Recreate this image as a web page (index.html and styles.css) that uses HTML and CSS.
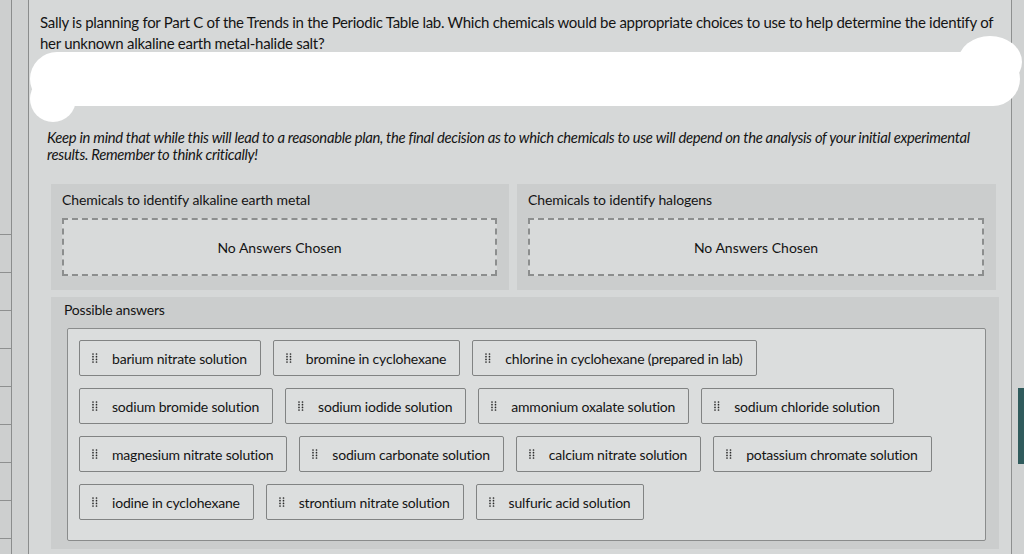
FILE: index.html
```html
<!DOCTYPE html>
<html lang="en">
<head>
<meta charset="utf-8">
<title>Trends in the Periodic Table</title>
<link rel="stylesheet" href="styles.css">
</head>
<body>
<div class="screen">
  <div class="rail"></div>
  <div class="gutter"></div>
  <main class="page">
    <p class="prompt">Sally is planning for Part C of the Trends in the Periodic Table lab. Which chemicals would be appropriate choices to use to help determine the identify of her unknown alkaline earth metal-halide salt?</p>
    <p class="hint">Keep in mind that while this will lead to a reasonable plan, the final decision as to which chemicals to use will depend on the analysis of your initial experimental results. Remember to think critically!</p>

    <section class="targets">
      <div class="target">
        <h3 class="target-title">Chemicals to identify alkaline earth metal</h3>
        <div class="dropzone">No Answers Chosen</div>
      </div>
      <div class="target">
        <h3 class="target-title">Chemicals to identify halogens</h3>
        <div class="dropzone">No Answers Chosen</div>
      </div>
    </section>

    <section class="pool">
      <h3 class="pool-title">Possible answers</h3>
      <div class="pool-box">
        <div class="chip-row">
          <div class="chip"><svg class="grip" viewBox="0 0 6 10"><circle cx="1" cy="1" r="0.85"/><circle cx="4.5" cy="1" r="0.85"/><circle cx="1" cy="3.7" r="0.85"/><circle cx="4.5" cy="3.7" r="0.85"/><circle cx="1" cy="6.4" r="0.85"/><circle cx="4.5" cy="6.4" r="0.85"/><circle cx="1" cy="9" r="0.85"/><circle cx="4.5" cy="9" r="0.85"/></svg><span>barium nitrate solution</span></div>
          <div class="chip"><svg class="grip" viewBox="0 0 6 10"><circle cx="1" cy="1" r="0.85"/><circle cx="4.5" cy="1" r="0.85"/><circle cx="1" cy="3.7" r="0.85"/><circle cx="4.5" cy="3.7" r="0.85"/><circle cx="1" cy="6.4" r="0.85"/><circle cx="4.5" cy="6.4" r="0.85"/><circle cx="1" cy="9" r="0.85"/><circle cx="4.5" cy="9" r="0.85"/></svg><span>bromine in cyclohexane</span></div>
          <div class="chip"><svg class="grip" viewBox="0 0 6 10"><circle cx="1" cy="1" r="0.85"/><circle cx="4.5" cy="1" r="0.85"/><circle cx="1" cy="3.7" r="0.85"/><circle cx="4.5" cy="3.7" r="0.85"/><circle cx="1" cy="6.4" r="0.85"/><circle cx="4.5" cy="6.4" r="0.85"/><circle cx="1" cy="9" r="0.85"/><circle cx="4.5" cy="9" r="0.85"/></svg><span>chlorine in cyclohexane (prepared in lab)</span></div>
        </div>
        <div class="chip-row">
          <div class="chip"><svg class="grip" viewBox="0 0 6 10"><circle cx="1" cy="1" r="0.85"/><circle cx="4.5" cy="1" r="0.85"/><circle cx="1" cy="3.7" r="0.85"/><circle cx="4.5" cy="3.7" r="0.85"/><circle cx="1" cy="6.4" r="0.85"/><circle cx="4.5" cy="6.4" r="0.85"/><circle cx="1" cy="9" r="0.85"/><circle cx="4.5" cy="9" r="0.85"/></svg><span>sodium bromide solution</span></div>
          <div class="chip"><svg class="grip" viewBox="0 0 6 10"><circle cx="1" cy="1" r="0.85"/><circle cx="4.5" cy="1" r="0.85"/><circle cx="1" cy="3.7" r="0.85"/><circle cx="4.5" cy="3.7" r="0.85"/><circle cx="1" cy="6.4" r="0.85"/><circle cx="4.5" cy="6.4" r="0.85"/><circle cx="1" cy="9" r="0.85"/><circle cx="4.5" cy="9" r="0.85"/></svg><span>sodium iodide solution</span></div>
          <div class="chip"><svg class="grip" viewBox="0 0 6 10"><circle cx="1" cy="1" r="0.85"/><circle cx="4.5" cy="1" r="0.85"/><circle cx="1" cy="3.7" r="0.85"/><circle cx="4.5" cy="3.7" r="0.85"/><circle cx="1" cy="6.4" r="0.85"/><circle cx="4.5" cy="6.4" r="0.85"/><circle cx="1" cy="9" r="0.85"/><circle cx="4.5" cy="9" r="0.85"/></svg><span>ammonium oxalate solution</span></div>
          <div class="chip"><svg class="grip" viewBox="0 0 6 10"><circle cx="1" cy="1" r="0.85"/><circle cx="4.5" cy="1" r="0.85"/><circle cx="1" cy="3.7" r="0.85"/><circle cx="4.5" cy="3.7" r="0.85"/><circle cx="1" cy="6.4" r="0.85"/><circle cx="4.5" cy="6.4" r="0.85"/><circle cx="1" cy="9" r="0.85"/><circle cx="4.5" cy="9" r="0.85"/></svg><span>sodium chloride solution</span></div>
        </div>
        <div class="chip-row">
          <div class="chip"><svg class="grip" viewBox="0 0 6 10"><circle cx="1" cy="1" r="0.85"/><circle cx="4.5" cy="1" r="0.85"/><circle cx="1" cy="3.7" r="0.85"/><circle cx="4.5" cy="3.7" r="0.85"/><circle cx="1" cy="6.4" r="0.85"/><circle cx="4.5" cy="6.4" r="0.85"/><circle cx="1" cy="9" r="0.85"/><circle cx="4.5" cy="9" r="0.85"/></svg><span>magnesium nitrate solution</span></div>
          <div class="chip"><svg class="grip" viewBox="0 0 6 10"><circle cx="1" cy="1" r="0.85"/><circle cx="4.5" cy="1" r="0.85"/><circle cx="1" cy="3.7" r="0.85"/><circle cx="4.5" cy="3.7" r="0.85"/><circle cx="1" cy="6.4" r="0.85"/><circle cx="4.5" cy="6.4" r="0.85"/><circle cx="1" cy="9" r="0.85"/><circle cx="4.5" cy="9" r="0.85"/></svg><span>sodium carbonate solution</span></div>
          <div class="chip"><svg class="grip" viewBox="0 0 6 10"><circle cx="1" cy="1" r="0.85"/><circle cx="4.5" cy="1" r="0.85"/><circle cx="1" cy="3.7" r="0.85"/><circle cx="4.5" cy="3.7" r="0.85"/><circle cx="1" cy="6.4" r="0.85"/><circle cx="4.5" cy="6.4" r="0.85"/><circle cx="1" cy="9" r="0.85"/><circle cx="4.5" cy="9" r="0.85"/></svg><span>calcium nitrate solution</span></div>
          <div class="chip"><svg class="grip" viewBox="0 0 6 10"><circle cx="1" cy="1" r="0.85"/><circle cx="4.5" cy="1" r="0.85"/><circle cx="1" cy="3.7" r="0.85"/><circle cx="4.5" cy="3.7" r="0.85"/><circle cx="1" cy="6.4" r="0.85"/><circle cx="4.5" cy="6.4" r="0.85"/><circle cx="1" cy="9" r="0.85"/><circle cx="4.5" cy="9" r="0.85"/></svg><span>potassium chromate solution</span></div>
        </div>
        <div class="chip-row">
          <div class="chip"><svg class="grip" viewBox="0 0 6 10"><circle cx="1" cy="1" r="0.85"/><circle cx="4.5" cy="1" r="0.85"/><circle cx="1" cy="3.7" r="0.85"/><circle cx="4.5" cy="3.7" r="0.85"/><circle cx="1" cy="6.4" r="0.85"/><circle cx="4.5" cy="6.4" r="0.85"/><circle cx="1" cy="9" r="0.85"/><circle cx="4.5" cy="9" r="0.85"/></svg><span>iodine in cyclohexane</span></div>
          <div class="chip"><svg class="grip" viewBox="0 0 6 10"><circle cx="1" cy="1" r="0.85"/><circle cx="4.5" cy="1" r="0.85"/><circle cx="1" cy="3.7" r="0.85"/><circle cx="4.5" cy="3.7" r="0.85"/><circle cx="1" cy="6.4" r="0.85"/><circle cx="4.5" cy="6.4" r="0.85"/><circle cx="1" cy="9" r="0.85"/><circle cx="4.5" cy="9" r="0.85"/></svg><span>strontium nitrate solution</span></div>
          <div class="chip"><svg class="grip" viewBox="0 0 6 10"><circle cx="1" cy="1" r="0.85"/><circle cx="4.5" cy="1" r="0.85"/><circle cx="1" cy="3.7" r="0.85"/><circle cx="4.5" cy="3.7" r="0.85"/><circle cx="1" cy="6.4" r="0.85"/><circle cx="4.5" cy="6.4" r="0.85"/><circle cx="1" cy="9" r="0.85"/><circle cx="4.5" cy="9" r="0.85"/></svg><span>sulfuric acid solution</span></div>
        </div>
      </div>
    </section>
  </main>
  <div class="edge"><div class="edge-tab"></div></div>

  <div class="redact">
    <div class="redact-bar"></div>
    <div class="redact-bump-right"></div>
    <div class="redact-bump-left"></div>
  </div>
</div>
</body>
</html>
```

FILE: styles.css
```css
* { box-sizing: border-box; }

html, body {
  margin: 0;
  padding: 0;
}

body {
  width: 1024px;
  height: 554px;
  overflow: hidden;
  background: #d3d5d5;
  font-family: Lato, "Open Sans", "Liberation Sans", sans-serif;
  color: #141414;
}

.screen {
  position: relative;
  display: flex;
  height: 554px;
}

.rail {
  width: 12px;
  flex: none;
  border-right: 1px solid #8b8d8d;
  background-color: #cdcfcf;
  background-image: repeating-linear-gradient(to bottom, transparent 0, transparent 37px, #8e9090 37px, #8e9090 38px);
  background-position: 0 197px;
  background-repeat: no-repeat;
  background-size: 100% 400px;
}

.gutter {
  width: 17px;
  flex: none;
  border-right: 1px solid #8b8d8d;
  background: #cfd1d1;
}

.page {
  flex: 1;
  min-width: 0;
  padding: 12px 12px 0 11px;
  border-right: 1px solid #8e9090;
  background: #d6d8d8;
}

.edge {
  width: 12px;
  flex: none;
  background: #d0d2d2;
  padding-top: 388px;
}

.edge-tab {
  margin-left: 6px;
  height: 76px;
  background: #2f5b5c;
}

.prompt {
  margin: 0;
  font-size: 15px;
  line-height: 21px;
  letter-spacing: -0.28px;
}

.hint {
  margin: 75px 0 0 7px;
  font-size: 14.8px;
  line-height: 17px;
  font-style: italic;
  letter-spacing: -0.3px;
}

.targets {
  margin: 21px 3px 0 11px;
  display: grid;
  grid-template-columns: 458px 1fr;
  gap: 8px;
}

.target {
  background: #cbcdcd;
  padding: 7px 12px 14px 11px;
}

.target-title {
  margin: 0 0 10px 0;
  font-size: 14px;
  line-height: 17px;
  font-weight: 400;
  letter-spacing: -0.1px;
}

.dropzone {
  height: 58px;
  border: 2px dashed #8c8e8e;
  background: #d8dada;
  display: flex;
  align-items: center;
  justify-content: center;
  font-size: 14px;
}

.pool {
  margin: 7px 0 0 11px;
  background: #cbcdcd;
  padding: 4px 13px 8px 16px;
}

.pool-title {
  margin: 0 0 10px -3px;
  font-size: 14px;
  line-height: 17px;
  font-weight: 400;
  letter-spacing: -0.2px;
}

.pool-box {
  border: 1px solid #8a8c8c;
  border-radius: 2px;
  background: #dbdddd;
  padding: 11px 11px 20px 11px;
  display: flex;
  flex-direction: column;
  gap: 12px;
}

.chip-row {
  display: flex;
  gap: 12px;
}

.chip {
  height: 36px;
  display: flex;
  align-items: center;
  gap: 14px;
  padding: 0 13px 0 12px;
  border: 1px solid #818383;
  border-radius: 2px;
  background: #dcdede;
  font-size: 14px;
  letter-spacing: -0.2px;
}

.grip {
  width: 6px;
  height: 10px;
  fill: #2a2a2a;
  flex: none;
}

.redact {
  position: absolute;
  left: 0;
  top: 0;
  width: 1024px;
  height: 130px;
  pointer-events: none;
}

.redact-bar {
  position: absolute;
  left: 30px;
  top: 52px;
  width: 990px;
  height: 54px;
  border-radius: 27px;
  background: #ffffff;
}

.redact-bump-right {
  position: absolute;
  left: 958px;
  top: 36px;
  width: 64px;
  height: 52px;
  border-radius: 50%;
  background: #ffffff;
}

.redact-bump-left {
  position: absolute;
  left: 30px;
  top: 76px;
  width: 46px;
  height: 46px;
  border-radius: 50%;
  background: #ffffff;
}
```
